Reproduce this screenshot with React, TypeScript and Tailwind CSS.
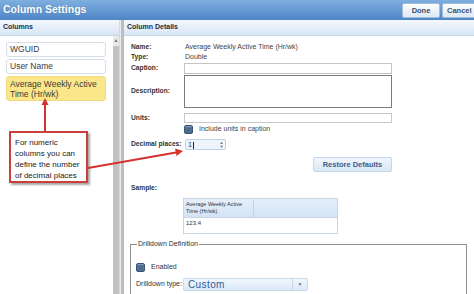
import React from 'react';

const font = { fontFamily: '"Liberation Sans", Arial, sans-serif' };

function Label({ children }: { children: React.ReactNode }) {
  return <div className="w-[53px] shrink-0 text-[6.7px] font-bold text-[#333]">{children}</div>;
}

function Checkbox() {
  return <div className="w-[9px] h-[9px] rounded-[2px] bg-[#4d6c8c] border border-[#3a5574] shadow-[inset_0_1px_1px_rgba(255,255,255,0.35)]" />;
}

export default function App() {
  const columns = ['WGUID', 'User Name'];

  return (
    <div className="relative w-[474px] h-[294px] overflow-hidden bg-white flex flex-col" style={font}>
      {/* Title bar */}
      <div className="h-[20px] shrink-0 flex items-center justify-between pl-[3px] bg-gradient-to-b from-[#80afe0] to-[#4d86c5]">
        <span className="text-[10.5px] font-bold text-white [text-shadow:0_0_1px_rgba(0,0,0,0.3)]">Column Settings</span>
        <div className="flex gap-[2px] self-start mt-[3px]">
          <button className="h-[15px] w-[38px] rounded-[2px] border border-[#a3bedb] bg-gradient-to-b from-white to-[#dbe8f6] text-[7.5px] font-bold text-[#34506f]">Done</button>
          <button className="h-[15px] w-[32px] rounded-l-[2px] border border-r-0 border-[#a3bedb] bg-gradient-to-b from-white to-[#dbe8f6] text-[7.5px] font-bold text-[#34506f] text-left pl-[4px] whitespace-nowrap overflow-hidden">Cancel</button>
        </div>
      </div>

      <div className="flex flex-1 min-h-0">
        {/* Columns panel */}
        <div className="w-[119px] shrink-0 flex flex-col">
          <div className="h-[16px] shrink-0 flex items-center pl-[3px] bg-gradient-to-b from-[#f4f8fd] to-[#d7e6f6] border-b border-[#c3d5ea] text-[7px] font-bold text-[#1f2d3d]">Columns</div>
          <div className="flex flex-1">
            <div className="w-[113px] flex flex-col gap-[2px] pt-[6px] pl-[6px] pr-[7px]">
              {columns.map((c) => (
                <div key={c} className="h-[15px] flex items-center pl-[3px] border border-[#d5dde7] rounded-[3px] text-[8.5px] text-[#3a3a3a]">{c}</div>
              ))}
              <div className="h-[25px] flex items-center pl-[3px] rounded-[3px] bg-[#fae78a] border border-[#eedb7e] text-[8.5px] leading-[10px] text-[#3a3a3a]">Average Weekly Active Time (Hr/wk)</div>
            </div>
            <div className="w-[6px] flex flex-col bg-[#c2c2c2]">
              <div className="h-[10px] bg-[#e9e9e9] flex items-center justify-center text-[5px] text-[#777]">▲</div>
            </div>
          </div>
        </div>

        {/* splitter */}
        <div className="w-[5px] shrink-0 bg-[#ececec] border-l border-[#d8d8d8] flex">
          <div className="ml-[1px] w-[3px] bg-[#bdbdbd]" />
        </div>

        {/* Details panel */}
        <div className="flex-1 flex flex-col min-w-0">
          <div className="h-[16px] shrink-0 flex items-center pl-[3px] bg-gradient-to-b from-[#f4f8fd] to-[#d7e6f6] border-b border-[#c3d5ea] text-[7px] font-bold text-[#1f2d3d]">Column Details</div>

          <div className="flex flex-col pl-[6px]">
            <div className="w-[262px] flex flex-col text-[7px] text-[#444]">
              <div className="h-[10px] mt-[6px] flex items-center pl-[1px]"><Label>Name:</Label><span className="ml-[1px]">Average Weekly Active Time (Hr/wk)</span></div>
              <div className="h-[10px] flex items-center pl-[1px]"><Label>Type:</Label><span className="ml-[1px]">Double</span></div>
              <div className="h-[11px] mt-[1px] flex items-center pl-[1px]"><Label>Caption:</Label><div className="flex-1 h-[11px] border border-[#c4c4c4]" /></div>
              <div className="h-[33px] mt-[1px] flex items-center pl-[1px]"><Label>Description:</Label><div className="flex-1 h-[33px] border border-[#7d7d7d]" /></div>
              <div className="h-[10px] mt-[5px] flex items-center pl-[1px]"><Label>Units:</Label><div className="flex-1 h-[10px] border border-[#c8c8c8]" /></div>
              <div className="h-[9px] mt-[2px] flex items-center pl-[54px] gap-[6px]"><Checkbox /><span>Include units in caption</span></div>
              <div className="h-[11px] mt-[5px] flex items-center pl-[1px]">
                <Label>Decimal places:</Label>
                <div className="ml-[1px] w-[41px] h-[11px] flex rounded-[2px] border border-[#bcd0e6] bg-[#edf4fc]">
                  <span className="flex-1 pl-[2px] leading-[9px] text-[#333]">1<span className="inline-block w-px h-[7px] bg-[#222] align-middle ml-px" /></span>
                  <div className="w-[7px] flex flex-col items-center justify-center text-[4px] leading-[4px] text-[#667]"><span>▲</span><span>▼</span></div>
                </div>
              </div>
              <button className="self-end mt-[7px] h-[15px] w-[79px] rounded-[2px] border border-[#c3d7ec] bg-gradient-to-b from-[#f1f7fd] to-[#d9e7f6] text-[7.5px] font-bold text-[#3d6088]">Restore Defaults</button>
              <div className="h-[10px] mt-[11px] flex items-center pl-[1px]"><Label>Sample:</Label></div>
              <div className="mt-[5px] ml-[53px] w-[155px] h-[36px] border border-[#c9d5e2] flex flex-col">
                <div className="h-[19px] flex bg-gradient-to-b from-[#e6effa] to-[#d3e3f5] border-b border-[#c9d5e2]">
                  <div className="w-[70px] border-r border-[#c3d1e0] pl-[2px] pt-[2px] text-[5.5px] leading-[6.5px] text-[#333]">Average Weekly Active Time (Hr/wk)</div>
                </div>
                <div className="pl-[2px] pt-[1px] text-[6px] text-[#333]">123.4</div>
              </div>
            </div>

            <fieldset className="mt-[6px] w-[337px] border border-[#8f8f8f] pl-[5px] pb-[20px] text-[7px] text-[#333]">
              <legend className="ml-[1px] px-[1px] leading-[8px]">Drilldown Definition</legend>
              <div className="mt-[15px] h-[9px] flex items-center gap-[6px]"><Checkbox /><span>Enabled</span></div>
              <div className="mt-[6px] flex items-center">
                <span className="w-[47px]">Drilldown type:</span>
                <div className="w-[125px] h-[13px] flex items-center rounded-[2px] border border-[#c8d9ec] bg-gradient-to-b from-[#f1f7fd] to-[#dce9f7]">
                  <span className="flex-1 pl-[4px] text-[10px] tracking-[0.4px] text-[#2f5d93]">Custom</span>
                  <div className="w-[15px] h-full border-l border-[#c8d9ec] flex items-center justify-center text-[5px] text-[#777]">▼</div>
                </div>
              </div>
            </fieldset>
          </div>
        </div>
      </div>

      {/* Annotation callout */}
      <div className="absolute left-[9px] top-[131px] w-[79px] h-[52px] border-2 border-[#c8413d] bg-white shadow-[2px_2px_2px_rgba(0,0,0,0.35)] pl-[4px] pt-[4px] text-[8px] leading-[11px] text-[#222]">
        For numeric columns you can define the number of decimal places
      </div>
      <svg className="absolute left-0 top-0 pointer-events-none" width="474" height="294">
        <line x1="45" y1="131" x2="45" y2="104" stroke="#d5322d" strokeWidth="2" />
        <polygon points="45,98 41.5,105 48.5,105" fill="#d5322d" />
        <line x1="88" y1="168" x2="176" y2="152.5" stroke="#d5322d" strokeWidth="2" />
        <polygon points="183,151 175,148.5 176.5,156" fill="#d5322d" />
      </svg>
    </div>
  );
}
